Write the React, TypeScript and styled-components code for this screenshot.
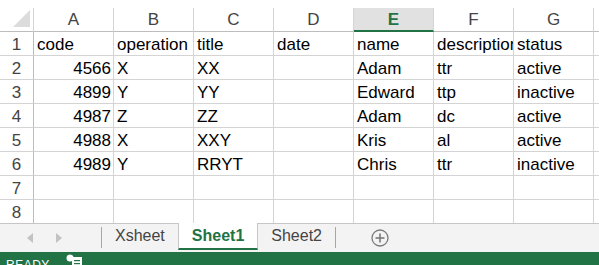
// Spreadsheet window

// ___________________________________________________________________

import * as React from 'react'
import styled, { createGlobalStyle } from 'styled-components'

// ___________________________________________________________________

const green = '#217346'
const gridLine = '#d4d4d4'

// the last column is only a sliver at the window edge, its letter is out of view
const columns = ['A', 'B', 'C', 'D', 'E', 'F', 'G', '']
const selectedColumn = 'E'

type Cell = string | number | null

const rows: Cell[][] = [
  ['code', 'operation', 'title', 'date', 'name', 'description', 'status'],
  [4566, 'X', 'XX', null, 'Adam', 'ttr', 'active'],
  [4899, 'Y', 'YY', null, 'Edward', 'ttp', 'inactive'],
  [4987, 'Z', 'ZZ', null, 'Adam', 'dc', 'active'],
  [4988, 'X', 'XXY', null, 'Kris', 'al', 'active'],
  [4989, 'Y', 'RRYT', null, 'Chris', 'ttr', 'inactive'],
  [],
  [],
]

// ___________________________________________________________________

const App = () => (
  <>
    <GlobalStyle />
    <Window>
      <Sheet>
        <Corner>
          <svg width="17" height="17" viewBox="0 0 17 17">
            <polygon points="17,0 17,17 0,17" fill="#dcdcdc" />
          </svg>
        </Corner>
        {columns.map((c, i) => (
          <ColumnHead key={i} selected={c === selectedColumn}>
            {c}
          </ColumnHead>
        ))}
        {rows.map((row, r) => (
          <React.Fragment key={r}>
            <RowHead>{r + 1}</RowHead>
            {columns.map((c, i) => {
              const value = row[i]
              return (
                <DataCell key={i} numeric={typeof value === 'number'}>
                  {value ?? ''}
                </DataCell>
              )
            })}
          </React.Fragment>
        ))}
      </Sheet>

      <TabBar>
        <Nav>
          <Arrow viewBox="0 0 6 10" width="6" height="10">
            <polygon points="6,0 6,10 0,5" />
          </Arrow>
          <Arrow viewBox="0 0 6 10" width="6" height="10">
            <polygon points="0,0 6,5 0,10" />
          </Arrow>
        </Nav>
        <Separator />
        <Tab>Xsheet</Tab>
        <Tab active>Sheet1</Tab>
        <Tab>Sheet2</Tab>
        <Separator />
        <AddSheet>
          <svg width="18" height="18" viewBox="0 0 18 18">
            <circle cx="9" cy="9" r="8" fill="none" stroke="#7a7a7a" strokeWidth="1.3" />
            <line x1="9" y1="4.5" x2="9" y2="13.5" stroke="#7a7a7a" strokeWidth="1.6" />
            <line x1="4.5" y1="9" x2="13.5" y2="9" stroke="#7a7a7a" strokeWidth="1.6" />
          </svg>
        </AddSheet>
      </TabBar>

      <StatusBar>
        <Ready>READY</Ready>
        <svg width="16" height="12" viewBox="0 0 16 12">
          <circle cx="4" cy="4" r="3.5" fill="#fff" />
          <rect x="6" y="3" width="10" height="9" fill="#fff" />
          <rect x="8" y="6" width="6" height="1.2" fill={green} />
          <rect x="8" y="9" width="6" height="1.2" fill={green} />
        </svg>
      </StatusBar>
    </Window>
  </>
)

export default App

// ___________________________________________________________________

const GlobalStyle = createGlobalStyle`
  html, body {
    margin: 0;
    padding: 0;
    background: #fff;
  }
  body {
    font-family: "Liberation Sans", Arial, sans-serif;
  }
`

const Window = styled.div`
  width: 599px;
  height: 265px;
  overflow: hidden;
  display: flex;
  flex-direction: column;
  background: #fff;
`

const Sheet = styled.div`
  display: grid;
  grid-template-columns: 34px repeat(8, 80px);
  grid-auto-rows: 24px;
  margin-top: 8px;
  font-size: 17px;
  color: #000;
`

const Corner = styled.div`
  border-right: 1px solid ${gridLine};
  border-bottom: 1px solid #bdbdbd;
  display: flex;
  align-items: flex-end;
  justify-content: flex-end;
  padding: 0 3px 4px 0;
`

const ColumnHead = styled.div<{ selected?: boolean }>`
  display: flex;
  align-items: center;
  justify-content: center;
  border-right: 1px solid ${gridLine};
  border-bottom: ${p => (p.selected ? `2px solid ${green}` : '1px solid #bdbdbd')};
  background: ${p => (p.selected ? '#e1e1e1' : '#fff')};
  color: ${p => (p.selected ? green : '#444')};
  font-weight: ${p => (p.selected ? 'bold' : 'normal')};
  padding-top: 1px;
`

const RowHead = styled.div`
  display: flex;
  align-items: center;
  justify-content: center;
  border-right: 1px solid #bdbdbd;
  border-bottom: 1px solid ${gridLine};
  color: #444;
  padding-top: 2px;
`

const DataCell = styled.div<{ numeric?: boolean }>`
  border-right: 1px solid ${gridLine};
  border-bottom: 1px solid ${gridLine};
  padding: 3px ${p => (p.numeric ? '2px' : '0')} 0 3px;
  text-align: ${p => (p.numeric ? 'right' : 'left')};
  white-space: nowrap;
  overflow: hidden;
  line-height: 19px;
`

const TabBar = styled.div`
  display: flex;
  align-items: flex-start;
  height: 28px;
  margin-top: -1px;
  border-top: 1px solid #c6c6c6;
  background: #f3f3f3;
  font-size: 16px;
`

const Nav = styled.div`
  width: 101px;
  height: 28px;
  display: flex;
  align-items: center;
  gap: 23px;
  padding-left: 27px;
  box-sizing: border-box;
`

const Arrow = styled.svg`
  fill: #c2c2c2;
`

const Separator = styled.div`
  width: 1px;
  height: 21px;
  margin-top: 3px;
  background: #a6a6a6;
`

const Tab = styled.div<{ active?: boolean }>`
  height: 24px;
  padding: 0 13px;
  display: flex;
  align-items: center;
  margin-top: ${p => (p.active ? '-1px' : '0')};
  background: ${p => (p.active ? '#fff' : 'transparent')};
  border-left: ${p => (p.active ? '1px solid #c6c6c6' : 'none')};
  border-right: ${p => (p.active ? '1px solid #c6c6c6' : 'none')};
  border-bottom: ${p => (p.active ? `2px solid ${green}` : '2px solid transparent')};
  color: ${p => (p.active ? green : '#444')};
  font-weight: ${p => (p.active ? 'bold' : 'normal')};
  padding-top: ${p => (p.active ? '1px' : '0')};
`

const AddSheet = styled.div`
  height: 28px;
  display: flex;
  align-items: center;
  margin-left: 35px;
`

const StatusBar = styled.div`
  flex: 1;
  background: ${green};
  display: flex;
  align-items: flex-start;
  gap: 16px;
  padding: 2px 0 0 6px;
  overflow: hidden;
`

const Ready = styled.span`
  color: #fff;
  font-size: 12px;
  line-height: 12px;
  margin-top: 5px;
  letter-spacing: 0.5px;
`
